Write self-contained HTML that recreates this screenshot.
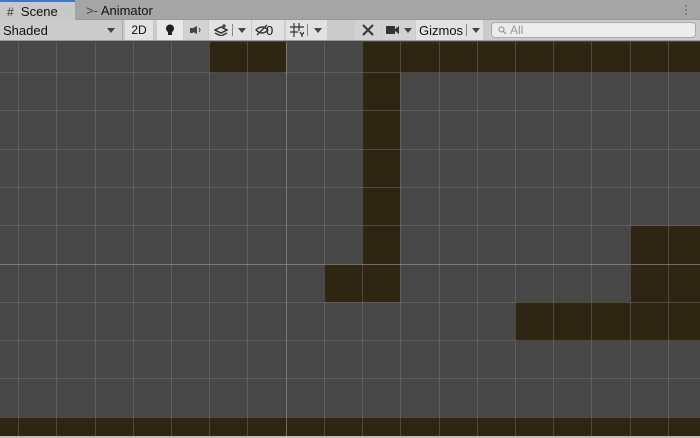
<!DOCTYPE html>
<html><head><style>
*{margin:0;padding:0;box-sizing:border-box}
body{width:700px;height:438px;overflow:hidden;background:#474747;font-family:"Liberation Sans",sans-serif;position:relative}
.tabs{position:absolute;left:0;top:0;width:700px;height:20px;background:#a5a5a5;border-bottom:1px solid #999}
.tab{position:absolute;top:0;height:20px;font-size:13px;color:#111;line-height:22px}
.tb{position:absolute;left:0;top:20px;width:700px;height:21px;background:#cbcbcb;border-bottom:1px solid #999}
.b{position:absolute;top:0;height:20px;background:#e2e2e2;font-size:12px;line-height:21px;color:#111;text-align:center}
.b svg{position:absolute}
.sep{position:absolute;top:4px;width:1px;height:12px;background:#888}
.arr{position:absolute;width:0;height:0;border-left:4px solid transparent;border-right:4px solid transparent;border-top:5px solid #444}
.d{position:absolute;background:#2e2612}
</style></head><body>
<div class="tabs">
 <div class="tab" style="left:0;width:75px;background:#c8c8c8;border-top:2px solid #3a79c9;line-height:19px;padding-left:7px"><span style="font-size:12px;color:#333">#</span>&nbsp; Scene</div>
 <div class="tab" style="left:86px;color:#111"><span style="color:#444">&gt;-</span> Animator</div>
 <div style="position:absolute;left:684px;top:3px;font-size:12px;color:#444;line-height:4px">·<br>·<br>·</div>
</div>
<div class="tb">
 <div style="position:absolute;left:3px;top:0;font-size:13px;line-height:21px;color:#111">Shaded</div>
 <div class="arr" style="left:107px;top:8px"></div>
 <div class="sep" style="left:122px;top:0;height:20px;background:#aaa"></div>
 <div class="b" style="left:125px;width:28px">2D</div>
 <div class="b" style="left:157px;width:26px;background:#e8e8e8"><svg style="left:8px;top:4px" width="10" height="12"><circle cx="5" cy="4.5" r="4" fill="#222"/><rect x="3" y="8" width="4" height="3" fill="#222"/></svg></div>
 <div class="b" style="left:184px;width:24px;background:#d2d2d2"><svg style="left:6px;top:6px" width="12" height="8"><rect x="0" y="2" width="3" height="5" fill="#444"/><path d="M3 2 L7 0 L7 8 L3 6Z" fill="#444"/><path d="M9 2 Q11 4 9 6" stroke="#444" fill="none"/></svg></div>
 <div class="b" style="left:209px;width:42px"><svg style="left:5px;top:4px" width="14" height="12"><path d="M1 6 L7 3 L13 6 L7 9Z M1 9 L7 12 L13 9" stroke="#333" stroke-width="1.5" fill="none"/><path d="M10 0 v4 M8 2 h4" stroke="#333" stroke-width="1.3"/></svg><span class="sep" style="left:23px"></span><span class="arr" style="left:29px;top:8px"></span></div>
 <div class="b" style="left:252px;width:32px;font-size:13px;padding-left:14px;text-align:left"><svg style="left:3px;top:4px" width="14" height="12"><path d="M1 6 Q7 0 13 6 Q7 12 1 6Z" stroke="#333" stroke-width="1.3" fill="none"/><line x1="2" y1="11" x2="12" y2="1" stroke="#333" stroke-width="1.3"/></svg>0</div>
 <div class="b" style="left:286px;width:41px"><svg style="left:4px;top:3px" width="14" height="14"><path d="M4 0v14 M9 0v8 M0 4h14 M0 9h8 M10 9 l2 3 l2-3 M12 12v2" stroke="#333" stroke-width="1.2" fill="none"/></svg><span class="sep" style="left:21px"></span><span class="arr" style="left:28px;top:8px"></span></div>
 <div class="b" style="left:355px;width:26px;background:#d2d2d2"><svg style="left:6px;top:3px" width="14" height="14"><path d="M2 2 L12 12 M12 2 L2 12" stroke="#333" stroke-width="2"/></svg></div>
 <div class="b" style="left:382px;width:33px;background:#d2d2d2"><svg style="left:4px;top:6px" width="14" height="8"><rect x="0" y="0" width="9" height="8" fill="#333"/><path d="M9 3 L13 0 L13 8 L9 5Z" fill="#333"/></svg><span class="arr" style="left:22px;top:8px"></span></div>
 <div class="b" style="left:416px;width:67px;font-size:13px;text-align:left;padding-left:3px">Gizmos<span class="sep" style="left:50px"></span><span class="arr" style="left:56px;top:8px"></span></div>
 <div style="position:absolute;left:491px;top:2px;width:205px;height:16px;background:#ececec;border:1px solid #aaa;border-radius:4px;font-size:12px;color:#999;line-height:14px;padding-left:18px">All<svg style="position:absolute;left:6px;top:3px" width="10" height="9"><circle cx="3.5" cy="3.5" r="2.5" stroke="#888" fill="none"/><line x1="5.5" y1="5.5" x2="8" y2="8" stroke="#888"/></svg></div>
</div>
<div class="d" style="left:209px;top:42px;width:77px;height:31px"></div>
<div class="d" style="left:362px;top:42px;width:338px;height:31px"></div>
<div class="d" style="left:362px;top:73px;width:38px;height:229px"></div>
<div class="d" style="left:324px;top:264px;width:38px;height:38px"></div>
<div class="d" style="left:630px;top:226px;width:70px;height:76px"></div>
<div class="d" style="left:515px;top:302px;width:185px;height:39px"></div>
<div class="d" style="left:0;top:417px;width:700px;height:19px"></div>
<div style="position:absolute;left:0;top:436px;width:700px;height:2px;background:#bdbdbd"></div>
<svg style="position:absolute;left:0;top:42px" width="700" height="394" viewBox="0 42 700 394">
<g stroke="rgba(130,130,130,0.4)" stroke-width="1">
<line x1="18.5" y1="42" x2="18.5" y2="436"/><line x1="56.5" y1="42" x2="56.5" y2="436"/><line x1="95.5" y1="42" x2="95.5" y2="436"/><line x1="133.5" y1="42" x2="133.5" y2="436"/><line x1="171.5" y1="42" x2="171.5" y2="436"/><line x1="209.5" y1="42" x2="209.5" y2="436"/><line x1="247.5" y1="42" x2="247.5" y2="436"/><line x1="324.5" y1="42" x2="324.5" y2="436"/><line x1="362.5" y1="42" x2="362.5" y2="436"/><line x1="400.5" y1="42" x2="400.5" y2="436"/><line x1="439.5" y1="42" x2="439.5" y2="436"/><line x1="477.5" y1="42" x2="477.5" y2="436"/><line x1="515.5" y1="42" x2="515.5" y2="436"/><line x1="553.5" y1="42" x2="553.5" y2="436"/><line x1="591.5" y1="42" x2="591.5" y2="436"/><line x1="630.5" y1="42" x2="630.5" y2="436"/><line x1="668.5" y1="42" x2="668.5" y2="436"/>
<line x1="0" y1="72.5" x2="700" y2="72.5"/><line x1="0" y1="110.5" x2="700" y2="110.5"/><line x1="0" y1="149.5" x2="700" y2="149.5"/><line x1="0" y1="187.5" x2="700" y2="187.5"/><line x1="0" y1="225.5" x2="700" y2="225.5"/><line x1="0" y1="302.5" x2="700" y2="302.5"/><line x1="0" y1="340.5" x2="700" y2="340.5"/><line x1="0" y1="378.5" x2="700" y2="378.5"/><line x1="0" y1="417.5" x2="700" y2="417.5"/>
</g>
<g stroke="rgba(150,150,150,0.65)" stroke-width="1"><line x1="286.5" y1="42" x2="286.5" y2="436"/><line x1="0" y1="264.5" x2="700" y2="264.5"/></g>
</svg>
</body></html>
